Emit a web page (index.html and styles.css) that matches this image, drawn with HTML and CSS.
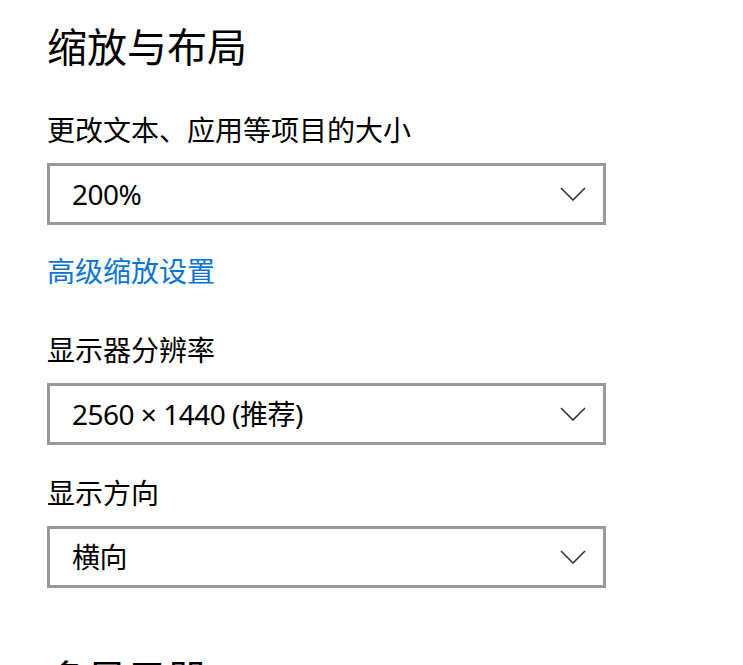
FILE: index.html
```html
<!DOCTYPE html>
<html lang="zh-CN">
<head>
<meta charset="utf-8">
<link rel="stylesheet" href="styles.css">
</head>
<body>
<main class="page">
  <h1 class="title">缩放与布局</h1>
  <div class="label first">更改文本、应用等项目的大小</div>
  <div class="select">
    <span class="value">200%</span>
    <svg class="chev" width="26" height="14" viewBox="0 0 26 14"><path d="M1 1 L13 13 L25 1" fill="none" stroke="#333" stroke-width="1.6"/></svg>
  </div>
  <a class="link" href="#">高级缩放设置</a>
  <div class="label">显示器分辨率</div>
  <div class="select">
    <span class="value">2560 × 1440 (推荐)</span>
    <svg class="chev" width="26" height="14" viewBox="0 0 26 14"><path d="M1 1 L13 13 L25 1" fill="none" stroke="#333" stroke-width="1.6"/></svg>
  </div>
  <div class="label mid">显示方向</div>
  <div class="select">
    <span class="value">横向</span>
    <svg class="chev" width="26" height="14" viewBox="0 0 26 14"><path d="M1 1 L13 13 L25 1" fill="none" stroke="#333" stroke-width="1.6"/></svg>
  </div>
  <h2 class="title next">多显示器</h2>
</main>
</body>
</html>
```
FILE: styles.css
```css
html, body {
  margin: 0;
  padding: 0;
  background: #fff;
  overflow: hidden;
  height: 665px;
}
.page {
  padding: 21px 0 0 47px;
  font-family: "Segoe UI", "Noto Sans", "Noto Sans CJK SC", sans-serif;
  color: #000;
}
.title {
  margin: 0;
  font-size: 40px;
  font-weight: 400;
  line-height: 48px;
  font-family: "Noto Sans CJK SC", sans-serif;
}
.label {
  font-size: 28px;
  line-height: 40px;
  margin: 39px 0 14px;
  font-family: "Noto Sans CJK SC", sans-serif;
}
.label.first { margin-top: 40px; }
.label.mid { margin-top: 27px; }
.select {
  box-sizing: border-box;
  width: 559px;
  height: 62px;
  border: 3px solid #999;
  display: flex;
  align-items: center;
  justify-content: space-between;
  padding: 0 17px 0 22px;
}
.value {
  font-size: 28px;
  line-height: 40px;
  letter-spacing: -0.5px;
  font-family: "Noto Sans", "Noto Sans CJK SC", sans-serif;
}
.chev { display: block; }
.link {
  display: block;
  margin-top: 25px;
  font-size: 28px;
  line-height: 40px;
  color: #0a74d2;
  text-decoration: none;
  font-family: "Noto Sans CJK SC", sans-serif;
}
.title.next { margin-top: 65px; }
```
